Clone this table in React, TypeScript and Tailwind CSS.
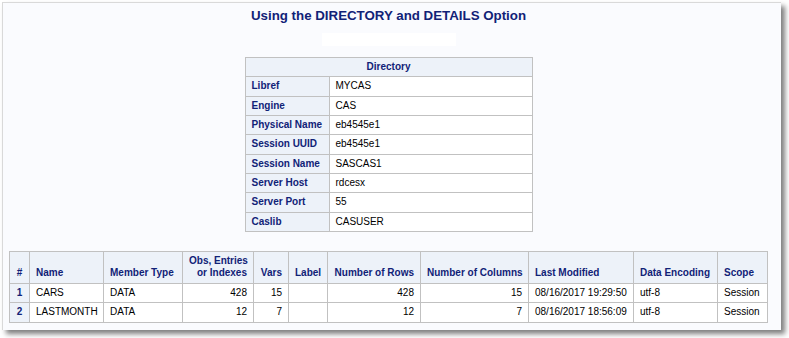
import React from 'react';

const navy = 'text-[#112277]';

const dirRows: [string, string][] = [
  ['Libref', 'MYCAS'],
  ['Engine', 'CAS'],
  ['Physical Name', 'eb4545e1'],
  ['Session UUID', 'eb4545e1'],
  ['Session Name', 'SASCAS1'],
  ['Server Host', 'rdcesx'],
  ['Server Port', '55'],
  ['Caslib', 'CASUSER'],
];

type Member = {
  n: number;
  name: string;
  type: string;
  obs: number;
  vars: number;
  label: string;
  rows: number;
  cols: number;
  modified: string;
  encoding: string;
  scope: string;
};

const members: Member[] = [
  { n: 1, name: 'CARS', type: 'DATA', obs: 428, vars: 15, label: '', rows: 428, cols: 15, modified: '08/16/2017 19:29:50', encoding: 'utf-8', scope: 'Session' },
  { n: 2, name: 'LASTMONTH', type: 'DATA', obs: 12, vars: 7, label: '', rows: 12, cols: 7, modified: '08/16/2017 18:56:09', encoding: 'utf-8', scope: 'Session' },
];

const cell = 'border border-[#c1c1c1] px-[6px] py-[3px] leading-[12.33px] whitespace-nowrap';
const head = `border border-[#c1c1c1] px-[6px] py-[3.5px] leading-[12px] align-bottom font-bold whitespace-nowrap ${navy} bg-[#edf2f9]`;
const data = 'border border-[#c1c1c1] px-[6px] py-[3px] leading-[12.5px] whitespace-nowrap bg-white text-black';

const DirectoryTable = () => (
  <table className="border-collapse table-fixed w-[288px]">
    <colgroup>
      <col className="w-[84px]" />
      <col />
    </colgroup>
    <thead>
      <tr>
        <th colSpan={2} className={`${cell} font-bold ${navy} bg-[#edf2f9] text-center`}>
          Directory
        </th>
      </tr>
    </thead>
    <tbody>
      {dirRows.map(([k, v]) => (
        <tr key={k}>
          <th className={`${cell} font-bold ${navy} bg-[#edf2f9] text-left`}>{k}</th>
          <td className={`${cell} bg-white text-black`}>{v}</td>
        </tr>
      ))}
    </tbody>
  </table>
);

const widths = [20, 74, 79, 71, 35, 39, 93, 108, 105, 84, 50];

const MemberTable = () => (
  <table className="border-collapse table-fixed w-[759px]">
    <colgroup>
      {widths.map((w, i) => (
        <col key={i} style={{ width: w }} />
      ))}
    </colgroup>
    <thead>
      <tr>
        <th className={`${head} text-center`}>#</th>
        <th className={`${head} text-left`}>Name</th>
        <th className={`${head} text-left`}>Member Type</th>
        <th className={`${head} text-right px-[5px]`}>
          Obs, Entries
          <br />
          or Indexes
        </th>
        <th className={`${head} text-right`}>Vars</th>
        <th className={`${head} text-left`}>Label</th>
        <th className={`${head} text-right`}>Number of Rows</th>
        <th className={`${head} text-right`}>Number of Columns</th>
        <th className={`${head} text-left`}>Last Modified</th>
        <th className={`${head} text-left`}>Data Encoding</th>
        <th className={`${head} text-left`}>Scope</th>
      </tr>
    </thead>
    <tbody>
      {members.map((m) => (
        <tr key={m.n}>
          <th className={`border border-[#c1c1c1] px-[6px] py-[3px] leading-[12.5px] font-bold ${navy} bg-[#edf2f9] text-center`}>
            {m.n}
          </th>
          <td className={data}>{m.name}</td>
          <td className={data}>{m.type}</td>
          <td className={`${data} text-right`}>{m.obs}</td>
          <td className={`${data} text-right`}>{m.vars}</td>
          <td className={data}>{m.label}</td>
          <td className={`${data} text-right`}>{m.rows}</td>
          <td className={`${data} text-right`}>{m.cols}</td>
          <td className={data}>{m.modified}</td>
          <td className={data}>{m.encoding}</td>
          <td className={data}>{m.scope}</td>
        </tr>
      ))}
    </tbody>
  </table>
);

export default function App() {
  return (
    <div className="w-[789px] h-[338px] bg-white pt-[2px] pl-[2px] overflow-hidden font-['Liberation_Sans',Arial,sans-serif] text-[10px]">
      <div className="w-[779px] h-[328px] bg-[#fafbfe] border-t border-l border-[#d9d9d9] shadow-[4px_4px_5px_rgba(0,0,0,0.5)] pr-[7px] flex flex-col items-center">
        <h1 className={`shrink-0 mt-[5px] text-[13.3px] leading-[16px] font-bold ${navy}`}>
          Using the DIRECTORY and DETAILS Option
        </h1>
        <div className="shrink-0 mt-[9px] w-[134px] h-[13px] bg-white" />
        <div className="shrink-0 mt-[11px]">
          <DirectoryTable />
        </div>
        <div className="shrink-0 mt-[19px]">
          <MemberTable />
        </div>
      </div>
    </div>
  );
}
